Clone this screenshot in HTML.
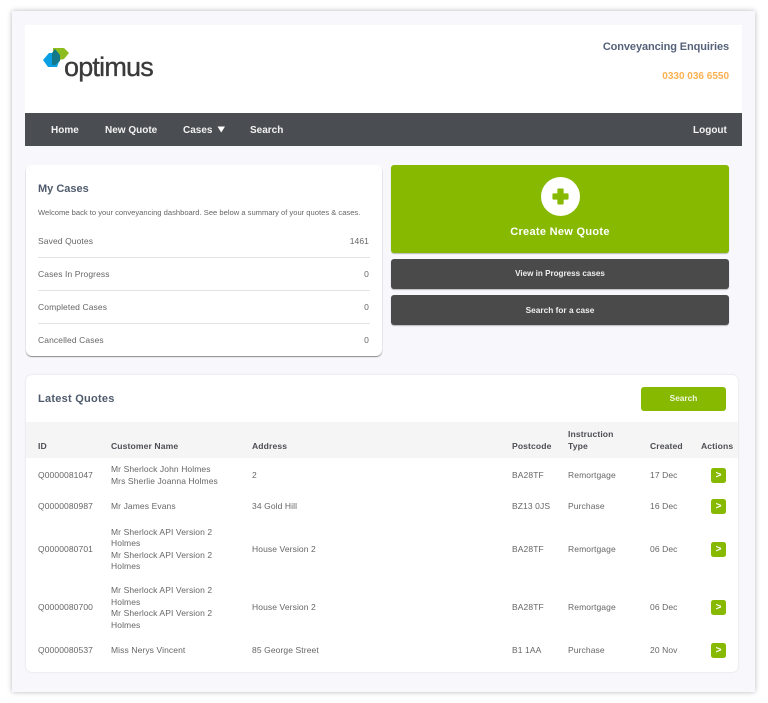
<!DOCTYPE html>
<html lang="en">
<head>
<meta charset="utf-8">
<title>Optimus</title>
<style>
html,body{margin:0;padding:0;background:#fff;}
body{width:768px;height:703px;overflow:hidden;position:relative;font-family:"Liberation Sans",Arial,sans-serif;}
#w{position:absolute;left:0;top:0;width:768px;height:703px;filter:blur(.35px);}
.a,.t{position:absolute;}
.t{white-space:nowrap;color:#666;font-size:8.5px;line-height:12px;letter-spacing:.1px;}
.b{font-weight:bold;}
.r{text-align:right;}
.c{text-align:center;}
.nav{color:#f2f2f2;font-weight:bold;font-size:10px;line-height:14px;letter-spacing:0;top:124px;}
.th{color:#4d4f55;font-weight:bold;font-size:8.6px;letter-spacing:.1px;}
.rule{position:absolute;left:38px;width:332px;height:1px;background:#e3e3e3;}
.go{position:absolute;left:711px;width:15px;height:15px;background:#86b900;border-radius:2.5px;color:#fff;font-weight:bold;font-size:10px;line-height:15px;text-align:center;}
</style>
</head>
<body>
<div id="w">
<div class="a" style="left:12px;top:11px;width:743px;height:681px;background:#f7f7fc;box-shadow:0 0 5px rgba(0,0,0,.28);"></div>

<div class="a" style="left:25px;top:25px;width:717px;height:88px;background:#fff;"></div>
<svg class="a" style="left:42px;top:47px" width="28" height="23" viewBox="0 0 28 23">
<path d="M11 1H22L27 6 22 12 17 13 11 6Z" fill="#8cbc1e"/>
<path d="M1 13L7 6H14L18 12 15 20H6Z" fill="#0a9fe3"/>
<path d="M10 6L13 2 18 8V14L13 18H10Z" fill="#12788a"/>
</svg>
<div class="t" style="left:64px;top:52px;font-size:27px;line-height:30px;font-weight:normal;color:#3a3a3a;letter-spacing:-.8px;-webkit-text-stroke:.35px #3a3a3a;">optimus</div>
<div class="t b r" style="right:39px;top:40px;color:#56627a;font-size:11px;line-height:14px;letter-spacing:-.1px;">Conveyancing Enquiries</div>
<div class="t b r" style="right:39px;top:70px;color:#fbb150;font-size:10px;line-height:13px;letter-spacing:0;">0330 036 6550</div>

<div class="a" style="left:25px;top:113px;width:717px;height:33px;background:#4a4d51;"></div>
<div class="t nav" style="left:51px;">Home</div>
<div class="t nav" style="left:105px;">New Quote</div>
<div class="t nav" style="left:183px;">Cases</div>
<svg class="a" style="left:217px;top:126px" width="9" height="7" viewBox="0 0 9 7"><path d="M.5 .5H8L4.250 6.500Z" fill="#fff"/></svg>
<div class="t nav" style="left:250px;">Search</div>
<div class="t nav" style="left:693px;">Logout</div>

<div class="a" style="left:26px;top:165px;width:356px;height:191px;background:#fff;border-radius:6px;box-shadow:0 1px 1px rgba(0,0,0,.45);"></div>
<div class="t b" style="left:38px;top:182px;color:#4f5b6c;font-size:11px;line-height:14px;letter-spacing:0;">My Cases</div>
<div class="t" style="left:38px;top:207px;font-size:7.6px;line-height:12px;letter-spacing:0;">Welcome back to your conveyancing dashboard. See below a summary of your quotes &amp; cases.</div>
<div class="t" style="left:38px;top:235px;">Saved Quotes</div><div class="t r" style="right:399px;top:235px;">1461</div>
<div class="rule" style="top:257px"></div>
<div class="t" style="left:38px;top:268px;">Cases In Progress</div><div class="t r" style="right:399px;top:268px;">0</div>
<div class="rule" style="top:290px"></div>
<div class="t" style="left:38px;top:301px;">Completed Cases</div><div class="t r" style="right:399px;top:301px;">0</div>
<div class="rule" style="top:323px"></div>
<div class="t" style="left:38px;top:334px;">Cancelled Cases</div><div class="t r" style="right:399px;top:334px;">0</div>

<div class="a" style="left:391px;top:165px;width:338px;height:88px;background:#86b900;border-radius:3px;box-shadow:0 1px 1px rgba(0,0,0,.25);"></div>
<div class="a" style="left:541px;top:177px;width:39px;height:39px;background:#fff;border-radius:50%;"></div>
<svg class="a" style="left:552px;top:188px" width="17" height="17" viewBox="0 0 19 19"><path d="M6 1.500Q6 .5 7 .5H12Q13 .5 13 1.500V6H17.500Q18.500 6 18.500 7V12Q18.500 13 17.500 13H13V17.500Q13 18.500 12 18.500H7Q6 18.500 6 17.500V13H1.500Q.5 13 .5 12V7Q.5 6 1.500 6H6Z" fill="#86b900"/></svg>
<div class="t b c" style="left:391px;width:338px;top:225px;color:#fff;font-size:11px;line-height:14px;letter-spacing:.3px;">Create New Quote</div>
<div class="a" style="left:391px;top:259px;width:338px;height:30px;background:#4a4a4a;border-radius:3px;box-shadow:0 1px 1px rgba(0,0,0,.25);"></div>
<div class="t b c" style="left:391px;width:338px;top:267px;color:#eee;font-size:8.1px;line-height:14px;letter-spacing:0;">View in Progress cases</div>
<div class="a" style="left:391px;top:295px;width:338px;height:30px;background:#4a4a4a;border-radius:3px;box-shadow:0 1px 1px rgba(0,0,0,.25);"></div>
<div class="t b c" style="left:391px;width:338px;top:303px;color:#eee;font-size:8.3px;line-height:14px;letter-spacing:0;">Search for a case</div>

<div class="a" style="left:26px;top:375px;width:712px;height:297px;background:#fff;border-radius:6px;box-shadow:0 0 2px rgba(0,0,0,.12);"></div>
<div class="t b" style="left:38px;top:392px;color:#4f5b6c;font-size:11px;line-height:14px;letter-spacing:.25px;">Latest Quotes</div>
<div class="a" style="left:641px;top:387px;width:85px;height:24px;background:#86b900;border-radius:3px;"></div>
<div class="t b c" style="left:641px;width:85px;top:391px;color:#f2f7e0;font-size:8.3px;line-height:14px;letter-spacing:0;">Search</div>
<div class="a" style="left:26px;top:422px;width:712px;height:36px;background:#f5f5f5;"></div>

<div class="t th" style="left:38px;top:440px;">ID</div>
<div class="t th" style="left:111px;top:440px;">Customer Name</div>
<div class="t th" style="left:252px;top:440px;">Address</div>
<div class="t th" style="left:512px;top:440px;">Postcode</div>
<div class="t th" style="left:568px;top:428px;">Instruction</div>
<div class="t th" style="left:568px;top:440px;">Type</div>
<div class="t th" style="left:650px;top:440px;">Created</div>
<div class="t th" style="left:701px;top:440px;">Actions</div>

<div class="t" style="left:38px;top:469px;">Q0000081047</div>
<div class="t" style="left:111px;top:463px;">Mr Sherlock John Holmes</div>
<div class="t" style="left:111px;top:475px;">Mrs Sherlie Joanna Holmes</div>
<div class="t" style="left:252px;top:469px;">2</div>
<div class="t" style="left:512px;top:469px;">BA28TF</div>
<div class="t" style="left:568px;top:469px;">Remortgage</div>
<div class="t" style="left:650px;top:469px;">17 Dec</div>
<div class="go" style="top:468px;">&gt;</div>

<div class="t" style="left:38px;top:500px;">Q0000080987</div>
<div class="t" style="left:111px;top:500px;">Mr James Evans</div>
<div class="t" style="left:252px;top:500px;">34 Gold Hill</div>
<div class="t" style="left:512px;top:500px;">BZ13 0JS</div>
<div class="t" style="left:568px;top:500px;">Purchase</div>
<div class="t" style="left:650px;top:500px;">16 Dec</div>
<div class="go" style="top:499px;">&gt;</div>

<div class="t" style="left:38px;top:543px;">Q0000080701</div>
<div class="t" style="left:111px;top:526px;">Mr Sherlock API Version 2</div>
<div class="t" style="left:111px;top:537px;">Holmes</div>
<div class="t" style="left:111px;top:549px;">Mr Sherlock API Version 2</div>
<div class="t" style="left:111px;top:560px;">Holmes</div>
<div class="t" style="left:252px;top:543px;">House Version 2</div>
<div class="t" style="left:512px;top:543px;">BA28TF</div>
<div class="t" style="left:568px;top:543px;">Remortgage</div>
<div class="t" style="left:650px;top:543px;">06 Dec</div>
<div class="go" style="top:542px;">&gt;</div>

<div class="t" style="left:38px;top:601px;">Q0000080700</div>
<div class="t" style="left:111px;top:584px;">Mr Sherlock API Version 2</div>
<div class="t" style="left:111px;top:596px;">Holmes</div>
<div class="t" style="left:111px;top:607px;">Mr Sherlock API Version 2</div>
<div class="t" style="left:111px;top:619px;">Holmes</div>
<div class="t" style="left:252px;top:601px;">House Version 2</div>
<div class="t" style="left:512px;top:601px;">BA28TF</div>
<div class="t" style="left:568px;top:601px;">Remortgage</div>
<div class="t" style="left:650px;top:601px;">06 Dec</div>
<div class="go" style="top:600px;">&gt;</div>

<div class="t" style="left:38px;top:644px;">Q0000080537</div>
<div class="t" style="left:111px;top:644px;">Miss Nerys Vincent</div>
<div class="t" style="left:252px;top:644px;">85 George Street</div>
<div class="t" style="left:512px;top:644px;">B1 1AA</div>
<div class="t" style="left:568px;top:644px;">Purchase</div>
<div class="t" style="left:650px;top:644px;">20 Nov</div>
<div class="go" style="top:643px;">&gt;</div>
</div>
</body>
</html>
